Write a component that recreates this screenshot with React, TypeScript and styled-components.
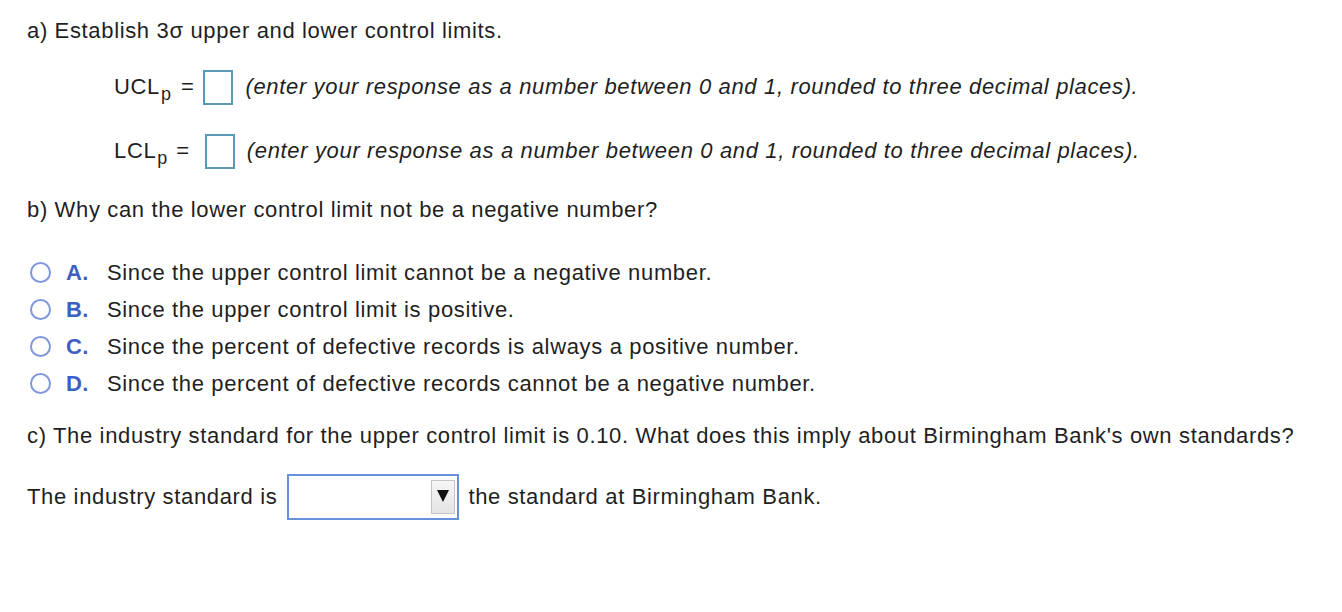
import React from "react";
import styled, { createGlobalStyle } from "styled-components";

const GlobalStyle = createGlobalStyle`
  html, body {
    margin: 0;
    padding: 0;
    background: #fff;
  }
  body {
    font-family: "Liberation Sans", Arial, Helvetica, sans-serif;
    color: #1f1f1f;
  }
`;

const Page = styled.div`
  width: 1342px;
  height: 612px;
  box-sizing: border-box;
  padding: 19px 0 0 27px;
  display: flex;
  flex-direction: column;
  font-size: 22px;
  letter-spacing: 0.65px;
`;

const Line = styled.div<{ $top?: number; $height?: number }>`
  margin-top: ${(p) => p.$top ?? 0}px;
  height: ${(p) => p.$height ?? 24}px;
  display: flex;
  align-items: center;
  white-space: nowrap;
`;

const FormulaRow = styled(Line)`
  padding-left: 87px;
`;

const Label = styled.span<{ $gap: number }>`
  display: inline-flex;
  align-items: baseline;
  margin-right: ${(p) => p.$gap}px;
`;

const Sub = styled.sub`
  font-size: 18px;
  letter-spacing: 0;
  position: relative;
  bottom: -6px;
  vertical-align: baseline;
  margin-left: 1px;
`;

const Equals = styled.span<{ $gap: number }>`
  margin-left: ${(p) => p.$gap}px;
`;

const AnswerBox = styled.span`
  display: inline-block;
  width: 26px;
  height: 31px;
  border: 2px solid #5b98b8;
  background: #fff;
`;

const Hint = styled.span`
  font-style: italic;
  margin-left: 12px;
`;

const Options = styled.div`
  margin-top: 32px;
  display: flex;
  flex-direction: column;
`;

const Option = styled.label`
  height: 37px;
  display: flex;
  align-items: center;
  white-space: nowrap;
`;

const Radio = styled.span`
  width: 17px;
  height: 17px;
  margin-left: 3px;
  border: 2px solid #8097dc;
  border-radius: 50%;
  box-sizing: content-box;
  flex-shrink: 0;
`;

const Letter = styled.span`
  width: 41px;
  margin-left: 15px;
  color: #3d5fc2;
  font-weight: bold;
  letter-spacing: 0.3px;
`;

const Select = styled.div`
  width: 166px;
  height: 42px;
  margin: 0 9px 0 10px;
  border: 2px solid #6790de;
  background: #fff;
  display: flex;
  justify-content: flex-end;
  align-items: center;
  padding-right: 2px;
`;

const Arrow = styled.span`
  width: 24px;
  height: 34px;
  box-sizing: border-box;
  border: 1px solid #c4c4c4;
  background: linear-gradient(#f6f6f6, #e4e4e4);
  display: flex;
  justify-content: center;
  padding-top: 9px;
  &::after {
    content: "";
    width: 0;
    height: 0;
    border-left: 6px solid transparent;
    border-right: 6px solid transparent;
    border-top: 12px solid #111;
  }
`;

const options = [
  { key: "A.", text: "Since the upper control limit cannot be a negative number." },
  { key: "B.", text: "Since the upper control limit is positive." },
  { key: "C.", text: "Since the percent of defective records is always a positive number." },
  { key: "D.", text: "Since the percent of defective records cannot be a negative number." },
];

const hint =
  "(enter your response as a number between 0 and 1, rounded to three decimal places).";

export default function App() {
  return (
    <>
      <GlobalStyle />
      <Page>
        <Line>a) Establish 3σ upper and lower control limits.</Line>

        <FormulaRow $top={26} $height={36}>
          <Label $gap={9}>
            UCL<Sub>p</Sub>
            <Equals $gap={10}>=</Equals>
          </Label>
          <AnswerBox />
          <Hint>{hint}</Hint>
        </FormulaRow>

        <FormulaRow $top={28} $height={36}>
          <Label $gap={15}>
            LCL<Sub>p</Sub>
            <Equals $gap={9}>=</Equals>
          </Label>
          <AnswerBox />
          <Hint>{hint}</Hint>
        </FormulaRow>

        <Line $top={29}>b) Why can the lower control limit not be a negative number?</Line>

        <Options>
          {options.map((o) => (
            <Option key={o.key}>
              <Radio />
              <Letter>{o.key}</Letter>
              {o.text}
            </Option>
          ))}
        </Options>

        <Line $top={22}>
          c) The industry standard for the upper control limit is 0.10. What does this imply
          about Birmingham Bank's own standards?
        </Line>

        <Line $top={26} $height={46}>
          The industry standard is
          <Select>
            <Arrow />
          </Select>
          the standard at Birmingham Bank.
        </Line>
      </Page>
    </>
  );
}
